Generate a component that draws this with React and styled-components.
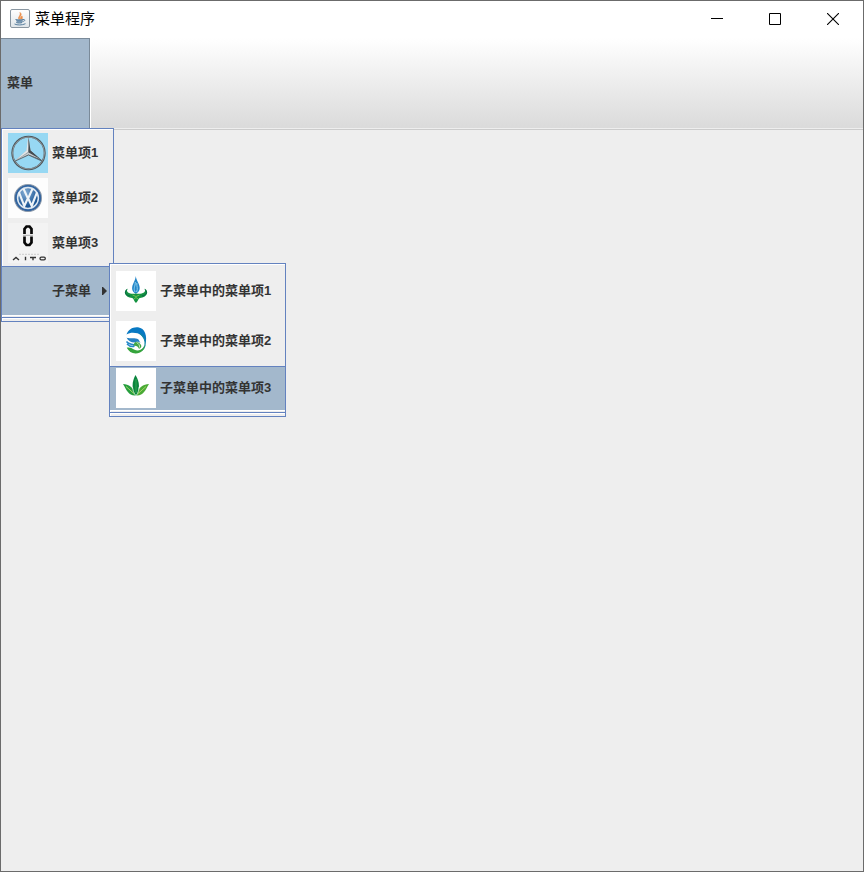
import React from "react";
import styled, { createGlobalStyle, css } from "styled-components";

const color = {
  frame: "#6b6b6b",
  panel: "#eeeeee",
  selected: "#a3b8cc",
  line: "#6382bf",
  edge: "#7a8a99",
  text: "#333333",
};

const GlobalStyle = createGlobalStyle`
  * { box-sizing: border-box; }
  body {
    margin: 0;
    background: ${color.panel};
    font-family: "Liberation Sans", "Noto Sans CJK SC", sans-serif;
  }
  button { font: inherit; color: inherit; margin: 0; cursor: default; }
  svg { display: block; flex: none; }
`;

const Window = styled.div`
  display: flex;
  flex-direction: column;
  min-height: 100vh;
  border: 1px solid ${color.frame};
  background: ${color.panel};
`;

const TitleBar = styled.header`
  display: flex;
  align-items: center;
  height: 37px;
  padding: 0 1px 1px 9px;
  background: #fff;
`;

const Title = styled.h1`
  flex: 1;
  margin: 0 0 0 5px;
  font-size: 15px;
  font-weight: 400;
  line-height: 20px;
  color: #000;
`;

const WindowButton = styled.button`
  display: flex;
  align-items: center;
  justify-content: center;
  width: 58px;
  height: 36px;
  padding: 0;
  border: 0;
  background: transparent;
`;

const MenuBar = styled.nav`
  position: relative;
  display: flex;
  height: 92px;
  border-bottom: 1px solid #cccccc;
  background: linear-gradient(#ffffff, #dadada);
  box-shadow: inset 0 -1px #eeeeee;
`;

const MenuButton = styled.button`
  width: 89px;
  padding: 0 5px 2px 6px;
  border: solid ${color.edge};
  border-width: 1px 1px 0 0;
  background: ${color.selected};
  box-shadow: 1px 0 #fff;
  color: ${color.text};
  font-size: 13px;
  font-weight: 700;
  line-height: 18px;
  text-align: left;
`;

const Popup = styled.ul`
  position: absolute;
  z-index: 1;
  margin: 0;
  padding: 2px 0 0;
  list-style: none;
  border: 1px solid ${color.line};
  background: ${color.panel};
  box-shadow: inset 1px 1px #fff;
  color: ${color.text};
  font-size: 13px;
  font-weight: 700;
  line-height: 18px;
  white-space: nowrap;
`;

const MainPopup = styled(Popup)`
  top: 90px;
  left: 0;
  width: 113px;
`;

const SubPopup = styled(Popup)`
  top: -3px;
  left: 107px;
  width: 177px;
`;

const Row = styled.li`
  position: relative;
`;

const Item = styled.button`
  display: flex;
  align-items: center;
  gap: 4px;
  width: 100%;
  height: ${(p) => p.$height}px;
  padding: 0 6px ${(p) => p.$height % 2}px 6px;
  border: solid transparent;
  border-width: 1px 0;
  background: transparent;
  text-align: left;
  ${(p) =>
    p.$selected &&
    css`
      border-top-color: ${color.line};
      border-bottom-color: #fff;
      background: ${color.selected};
    `}
`;

const IconSlot = styled.span`
  flex: none;
  width: 40px;
  height: 40px;
`;

const Label = styled.span`
  flex: 1;
`;

const Separator = styled.li`
  height: 5px;
  margin-top: 1px;
  margin-bottom: -1px;
  border-top: 1px solid ${color.line};
  box-shadow: inset 0 1px #fff;
`;

const JavaIcon = () => (
  <svg width="20" height="20" viewBox="0 0 20 20" fill="none">
    <defs>
      <linearGradient id="java-tile" x1="0" y1="0" x2="0" y2="1">
        <stop stopColor="#fff" />
        <stop offset="1" stopColor="#dfe5e9" />
      </linearGradient>
    </defs>
    <rect x=".5" y=".5" width="19" height="18" rx="1.5" fill="url(#java-tile)" stroke="#8996a1" />
    <path d="M9.5 10.5c-2.7-2.2 1.8-3.4.5-7 3.2 2.7-1.5 4.1-.5 7M10.5 10.2c-.5-1.5.4-2 1.6-3.1-.2 1.5.8 1.9-.4 3.1" fill="#f28d43" stroke="#e98b49" strokeWidth=".8" />
    <path d="M5.8 10.5h7.2l-1 3.2H7z" fill="#7897b2" />
    <path d="M5.5 10.5c2 .8 5.5.8 7.5 0 2.5-.5 2.5 1.8-.5 2M4.5 15c3 1.4 7.5 1.3 11-.3M6.2 13.5c2 .7 4.4.7 6 0" stroke="#587f9f" />
  </svg>
);

const MercedesIcon = () => (
  <svg width="40" height="40" viewBox="0 0 40 40">
    <defs>
      <linearGradient id="chrome" x1="0" y1="0" x2="1" y2="1">
        <stop stopColor="#737b7f" />
        <stop offset=".45" stopColor="#c5ccd0" />
        <stop offset=".65" stopColor="#686d70" />
        <stop offset="1" stopColor="#414648" />
      </linearGradient>
    </defs>
    <path d="M0 0h40v40H0z" fill="#97d8f3" />
    <circle cx="20.5" cy="20" r="16.2" fill="none" stroke="#4e575c" strokeWidth="2" />
    <circle cx="20.5" cy="20" r="16" fill="none" stroke="#a6afb3" strokeWidth=".7" />
    <path d="m20.5 4 2 13.5L34.5 28 20.5 22 6.5 28l12-10.5z" fill="url(#chrome)" />
    <path d="M20 5v14L8 27l10.5-9.5z" fill="#e4e8ea" />
    <path d="m20.5 4 2 13.5L34.5 28 20.5 19.5z" fill="#454d51" />
    <path d="m20.5 19.5 12.5 7-12.5-5L9 27z" fill="#c5cccf" />
    <path d="M7 28.2 20.5 22 34 28.2" fill="none" stroke="#4f575a" strokeWidth=".8" />
  </svg>
);

const VolkswagenIcon = () => (
  <svg width="40" height="40" viewBox="0 0 40 40" fill="none">
    <defs>
      <radialGradient id="vw-blue" cx=".4" cy=".3">
        <stop stopColor="#82add5" />
        <stop offset="1" stopColor="#1e5795" />
      </radialGradient>
    </defs>
    <path d="M0 0h40v40H0z" fill="#fdfdfd" />
    <circle cx="20" cy="20" r="13.4" fill="url(#vw-blue)" stroke="#8d9aaa" strokeWidth="1.2" />
    <circle cx="20" cy="20" r="12.2" stroke="#3264a0" strokeWidth="1.5" />
    <circle cx="20" cy="20" r="10.4" stroke="#dce6f0" strokeWidth="1.5" />
    <path d="m15.5 10.8 3.7 8.2h1.6l3.7-8.2M11 14.3 16.3 28l3.2-7h1l3.2 7L29 14.3" stroke="#eef4f8" strokeWidth="2.1" />
  </svg>
);

const AitoIcon = () => (
  <svg width="40" height="40" viewBox="0 0 40 40" fill="none">
    <path d="M0 0h40v40H0z" fill="#f3f3f3" />
    <path d="M16.5 11V6l2-2.5h3l2 2.5v5M16.5 13.5v6l2 2.5h3l2-2.5v-6" stroke="#080808" strokeWidth="2.7" />
    <path d="M15 12.3h10" stroke="#aaa" />
    <path d="M11 31.3h20" stroke="#ccc" strokeDasharray="2 1" />
    <path d="m5 37 3-2.5 3 2.5M17.5 33.8v3.4M22 34.5h6M25 34.5v2.7" stroke="#333" strokeWidth="1.4" />
    <rect x="32" y="34.2" width="5.3" height="2.6" rx="1.3" stroke="#333" strokeWidth="1.3" />
  </svg>
);

const DropIcon = () => (
  <svg width="40" height="40" viewBox="0 0 40 40" fill="none">
    <path d="M0 0h40v40H0z" fill="#fff" />
    <path d="M19.8 5c.5 5 3.9 7.5 3.9 12 0 2.8-1.6 4.8-3.9 5.8-2.3-1-3.7-3.2-3.7-5.3C16.1 13 19.3 10 19.8 5Z" fill="#2385c8" />
    <path d="M19.3 11c0 5-2.3 6-.2 10M20.8 12c-.2 4 1.3 5-.2 9" stroke="#8fd0ed" />
    <path d="M11.5 17.5c-5 3.2-2.5 9 4.5 9.5 1.8.2 2.6 4.7 4 4.7s2.3-4.5 4-4.7c7-.5 9.5-6.3 4.7-9.5 2 4.3-3.2 5.8-8.7 5-5.5.8-10.7-.7-8.5-5Z" fill="#159341" />
    <path d="M11 18.5c-3 3-1.5 5.5 3 6.5M29 18.5c3 3 1.5 5.5-3 6.5" stroke="#08664c" />
    <path d="m16.5 24 3.5 1.5 3.5-1.5M18 28l2-1.5 2 1.5" stroke="#72c14b" />
  </svg>
);

const WingIcon = () => (
  <svg width="40" height="40" viewBox="0 0 40 40" fill="none">
    <path d="M0 0h40v40H0z" fill="#fff" />
    <path d="M10.5 13.5C12 8.5 17 5.7 22 6.3c7 .8 9.5 9 7.5 17-.3-5.5-3.5-9.5-8-11-4-1-8-.8-11 1.2Z" fill="#0879c3" />
    <path d="M24 12.5c4 3 5.8 6.5 5 12-.5 2-2 4-3.5 5" stroke="#1287a5" strokeWidth="1.2" />
    <path d="M10.5 16.5c3 1.8 8-.5 12 2l2 3.5c-2-1.8-4.5-1.5-6-.5-3.5-.1-6.5-1.7-8-5Z" fill="#2681c2" />
    <path d="M10.5 20.5c2 2.5 5 2.8 8 3.3M11 23c2 2.2 4.5 2.8 7.5 2.3" stroke="#2588c9" strokeWidth="1.5" />
    <path d="M17.5 24.8c.5-4.3 4-5.6 7.2-1.3 1.5 2 0 4-1.7 4.2-1-2.5-3-3.5-5.5-2.9Z" fill="#40a745" />
    <path d="M20.5 21.5c2.5 1.2 3.3 3 3 5" stroke="#c8e9b7" />
    <path d="M10.7 26.8c2.3-.8 4.8-.2 7.3 1.7 4.5 2.1 8.7.7 10.7-4.5.2 5-4 8.7-9.2 8.5-3.8-.1-6.9-2.2-8.8-5.7Z" fill="#35a43c" />
  </svg>
);

const LeafIcon = () => (
  <svg width="40" height="40" viewBox="0 0 40 40" fill="none">
    <path d="M0 0h40v40H0z" fill="#fff" />
    <path d="M7 16c5.5.5 11 3 12.8 11.5C12.5 28 11 22.5 7 16Z" fill="#269e3e" />
    <path d="M33 16c-5.5.5-11 3-12.8 11.5C27.5 28 29 22.5 33 16Z" fill="#4aaa35" />
    <path d="M19.5 7c-3.7 7-4.2 13.5.5 21 4.5-7.5 3.5-14.5-.5-21Z" fill="#0a843e" />
    <path d="m10 18.5 8.5 7.5M30 18.5 21.5 26" stroke="#a1d666" />
    <path d="M20 11v14" stroke="#32a553" />
    <path d="M16.5 19c.3 3.5 1.3 6 3.5 8.8 2-2.8 3-5.3 3-8.8" stroke="#fff" strokeWidth=".6" />
  </svg>
);

const Arrow = () => (
  <svg width="5" height="8" viewBox="0 0 5 8">
    <path d="M0 0h1l4 4-4 4H0z" fill={color.text} />
  </svg>
);

const mainItems = [
  { label: "菜单项1", Icon: MercedesIcon },
  { label: "菜单项2", Icon: VolkswagenIcon },
  { label: "菜单项3", Icon: AitoIcon },
];

const subItems = [
  { label: "子菜单中的菜单项1", Icon: DropIcon, height: 50 },
  { label: "子菜单中的菜单项2", Icon: WingIcon, height: 50 },
  { label: "子菜单中的菜单项3", Icon: LeafIcon, height: 45, selected: true },
];

function MenuItem({ label, Icon, height = 45, selected }) {
  return (
    <Row role="none">
      <Item role="menuitem" $height={height} $selected={selected}>
        <IconSlot><Icon /></IconSlot>
        <Label>{label}</Label>
      </Item>
    </Row>
  );
}

export default function App() {
  return (
    <>
      <GlobalStyle />
      <Window>
        <TitleBar>
          <JavaIcon />
          <Title>菜单程序</Title>
          <WindowButton aria-label="最小化">
            <svg width="12" height="12" viewBox="0 0 12 12"><path d="M0 5h12v1H0z" /></svg>
          </WindowButton>
          <WindowButton aria-label="最大化">
            <svg width="12" height="12" viewBox="0 0 12 12"><path d="M.5.5h11v11H.5z" fill="none" stroke="#000" /></svg>
          </WindowButton>
          <WindowButton aria-label="关闭">
            <svg width="12" height="12" viewBox="0 0 12 12"><path d="m0 0 12 12M12 0 0 12" stroke="#000" strokeWidth="1.1" /></svg>
          </WindowButton>
        </TitleBar>
        <MenuBar>
          <MenuButton aria-haspopup="menu" aria-expanded="true">菜单</MenuButton>
          <MainPopup role="menu">
            {mainItems.map((item) => <MenuItem key={item.label} {...item} />)}
            <Row role="none">
              <Item role="menuitem" aria-haspopup="menu" aria-expanded="true" $height={50} $selected>
                <IconSlot />
                <Label>子菜单</Label>
                <Arrow />
              </Item>
              <SubPopup role="menu">
                {subItems.map((item) => <MenuItem key={item.label} {...item} />)}
                <Separator role="separator" />
              </SubPopup>
            </Row>
            <Separator role="separator" />
          </MainPopup>
        </MenuBar>
      </Window>
    </>
  );
}
